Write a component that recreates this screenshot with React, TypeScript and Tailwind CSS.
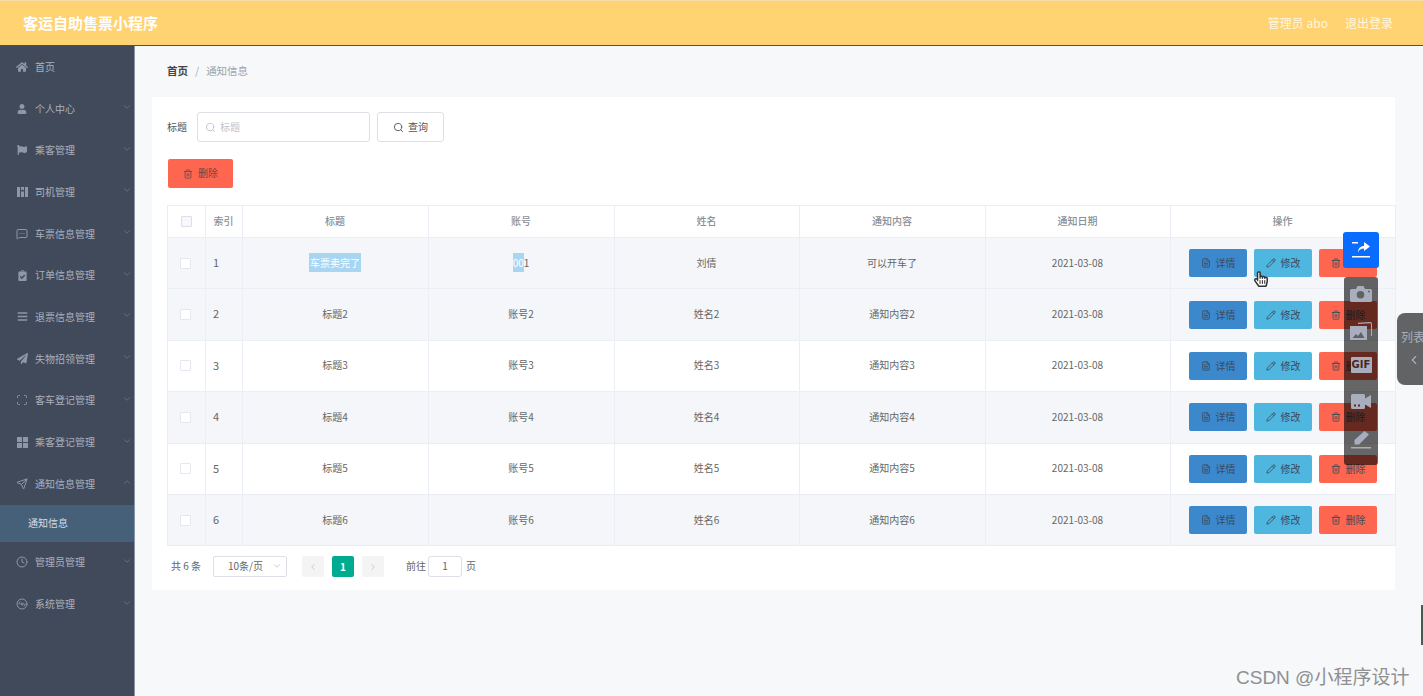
import { ChevronDown, ChevronLeft, ChevronRight, ChevronUp, Clock, Disc3, FileText, MessageSquareMore, Pencil, Scan, Search, Send, Trash2 } from 'lucide-react';
import { FaBars, FaClipboardCheck, FaFlag, FaHandPointer, FaHome, FaPaperPlane, FaRegHandPointer, FaUser } from 'react-icons/fa';
import type { ReactNode } from 'react';

const menu: { label: string; icon: ReactNode; arrow?: 'down' | 'up' }[] = [
  { label: '首页', icon: <FaHome size={12} /> },
  { label: '个人中心', icon: <FaUser size={10} />, arrow: 'down' },
  { label: '乘客管理', icon: <FaFlag size={10} />, arrow: 'down' },
  {
    label: '司机管理',
    icon: (
      <svg width="11" height="11" viewBox="0 0 11 11" fill="currentColor">
        <path d="M0 1h3v10H0zM4 1h3v3.500l-1.500-1L4 4.500zM4 5.500h3V11H4zM8 1h3v10H8z" />
      </svg>
    ),
    arrow: 'down',
  },
  { label: '车票信息管理', icon: <MessageSquareMore size={12} />, arrow: 'down' },
  { label: '订单信息管理', icon: <FaClipboardCheck size={11} />, arrow: 'down' },
  { label: '退票信息管理', icon: <FaBars size={11} />, arrow: 'down' },
  { label: '失物招领管理', icon: <FaPaperPlane size={11} />, arrow: 'down' },
  { label: '客车登记管理', icon: <Scan size={12} />, arrow: 'down' },
  {
    label: '乘客登记管理',
    icon: (
      <svg width="11" height="11" viewBox="0 0 11 11" fill="currentColor">
        <path d="M0 0h5v5H0zM6 0h5v5H6zM0 6h5v5H0zM6 6h5v5H6z" />
      </svg>
    ),
    arrow: 'down',
  },
  { label: '通知信息管理', icon: <Send size={12} />, arrow: 'up' },
];

const bottomMenu = [
  { label: '管理员管理', icon: <Clock size={12} /> },
  { label: '系统管理', icon: <Disc3 size={12} /> },
];

const rows = [
  { id: 1, title: '车票卖完了', account: '001', name: '刘倩', content: '可以开车了' },
  { id: 2, title: '标题2', account: '账号2', name: '姓名2', content: '通知内容2' },
  { id: 3, title: '标题3', account: '账号3', name: '姓名3', content: '通知内容3' },
  { id: 4, title: '标题4', account: '账号4', name: '姓名4', content: '通知内容4' },
  { id: 5, title: '标题5', account: '账号5', name: '姓名5', content: '通知内容5' },
  { id: 6, title: '标题6', account: '账号6', name: '姓名6', content: '通知内容6' },
];

function MenuItem({ label, icon, arrow }: { label: string; icon: ReactNode; arrow?: 'down' | 'up' }) {
  return (
    <div className="flex h-[41.7px] items-center pl-[16px] pr-[2px] text-[10px] text-[#a9b1bd]">
      <span className="flex w-[12px] justify-center text-[#8f97a5]">{icon}</span>
      <span className="ml-[7px] flex-1 pb-[1px]">{label}</span>
      {arrow === 'down' && <ChevronDown size={10} className="-mt-[3px] text-[#6d7686]" />}
      {arrow === 'up' && <ChevronUp size={10} className="-mt-[3px] text-[#6d7686]" />}
    </div>
  );
}

function ActionButton({ color, icon, label }: { color: string; icon: ReactNode; label: string }) {
  return (
    <span className={`flex h-[28px] w-[58px] items-center justify-center gap-[5px] rounded-[2px] text-[10px] text-[#3f4a55] ${color}`}>
      {icon}
      <span className="pb-[1px]">{label}</span>
    </span>
  );
}

export default function App() {
  return (
    <div className="relative flex h-[696px] w-[1423px] flex-col overflow-hidden bg-[#f6f8fa] font-['Noto_Sans_CJK_SC','Noto_Sans',sans-serif]">
      {/* Header */}
      <header className="flex h-[46px] shrink-0 items-center justify-between border-t border-b border-t-[#f6dca8] border-b-[#5a5040] bg-[#ffd272] pl-[23px] pr-[30px] text-white">
        <span className="text-[15px] font-bold">客运自助售票小程序</span>
        <div className="flex gap-[17px] text-[12px] text-[#fff6e0]">
          <span>管理员 abo</span>
          <span>退出登录</span>
        </div>
      </header>

      <div className="flex min-h-0 flex-1">
        {/* Sidebar */}
        <aside className="w-[135px] shrink-0 border-r border-r-[#8a95a3] bg-[#414a5b]">
          {menu.map((m) => (
            <MenuItem key={m.label} {...m} />
          ))}
          <div className="flex h-[37px] items-center bg-[#47607a] pb-[2px] pl-[28px] text-[10px] text-[#d5dde5]">通知信息</div>
          {bottomMenu.map((m) => (
            <MenuItem key={m.label} {...m} arrow="down" />
          ))}
        </aside>

        {/* Main */}
        <main className="min-w-0 flex-1 pl-[17px] pr-[28px]">
          <div className="flex h-[51px] items-center gap-[7px] pb-[2px] pl-[15px] text-[10.5px]">
            <span className="font-bold text-[#444]">首页</span>
            <span className="text-[#a8b0ba]">/</span>
            <span className="text-[#9aa5b1]">通知信息</span>
          </div>

          <section className="h-[493px] bg-white px-[15px] pt-[15px]">
            <div className="flex h-[30px] items-center">
              <span className="w-[22px] pb-[2px] text-[10px] text-[#555]">标题</span>
              <div className="ml-[8px] flex h-[30px] w-[173px] items-center rounded-[3px] border border-[#dcdfe6] pl-[7px] text-[10px] text-[#c0c4cc]">
                <Search size={11} />
                <span className="ml-[4px] pb-[2px]">标题</span>
              </div>
              <div className="ml-[7px] flex h-[30px] w-[67px] items-center justify-center gap-[4px] rounded-[3px] border border-[#dcdfe6] text-[10px] text-[#555]">
                <Search size={11} />
                <span className="pb-[2px]">查询</span>
              </div>
            </div>

            <div className="ml-[1px] mt-[17px] flex h-[29px] w-[65px] items-center justify-center gap-[5px] rounded-[2px] bg-[#ff6650] text-[10px] text-[#6b4a44]">
              <Trash2 size={10} />
              <span className="pb-[2px]">删除</span>
            </div>

            <table className="mt-[17px] w-[1228px] table-fixed border-collapse border border-[#ebeef5] text-center text-[10px] text-[#666]">
              <colgroup>
                <col className="w-[38px]" />
                <col className="w-[37px]" />
                <col className="w-[186px]" />
                <col className="w-[186px]" />
                <col className="w-[185px]" />
                <col className="w-[186px]" />
                <col className="w-[185px]" />
                <col className="w-[225px]" />
              </colgroup>
              <thead>
                <tr className="h-[32px] text-[#8b9097]">
                  <th className="border border-[#ebeef5] font-medium">
                    <span className="mx-auto block h-[11px] w-[11px] rounded-[1px] border border-[#dcdfe6] bg-[#f7f8fb]" />
                  </th>
                  {['索引', '标题', '账号', '姓名', '通知内容', '通知日期', '操作'].map((h) => (
                    <th key={h} className="border border-[#ebeef5] pb-[2px] pr-[1px] font-medium">
                      {h}
                    </th>
                  ))}
                </tr>
              </thead>
              <tbody>
                {rows.map((r) => (
                  <tr key={r.id} className={`h-[51.4px] ${r.id === 3 || r.id === 5 ? 'bg-white' : 'bg-[#f4f6fa]'}`}>
                    <td className="border border-[#ebeef5] pr-[3px]">
                      <span className="mx-auto block h-[11px] w-[11px] rounded-[1px] border border-[#e4e7ed] bg-white" />
                    </td>
                    <td className="border border-[#ebeef5] pb-[2px] pl-[7px] text-left text-[11px]">{r.id}</td>
                    <td className="border border-[#ebeef5] pb-[2px] pr-[1px]">
                      {r.id === 1 ? <span className="bg-[#a8d6f2] px-[1px] py-[2px] text-white">{r.title}</span> : r.title}
                    </td>
                    <td className="border border-[#ebeef5] pb-[2px] pr-[1px]">
                      {r.id === 1 ? (
                        <>
                          <span className="bg-[#a8d6f2] py-[2px] text-white">00</span>1
                        </>
                      ) : (
                        r.account
                      )}
                    </td>
                    <td className="border border-[#ebeef5] pb-[2px] pr-[1px]">{r.name}</td>
                    <td className="border border-[#ebeef5] pb-[2px] pr-[1px]">{r.content}</td>
                    <td className="border border-[#ebeef5] pb-[2px] pr-[1px]">2021-03-08</td>
                    <td className="border border-[#ebeef5]">
                      <div className="flex justify-center gap-[7px]">
                        <ActionButton color="bg-[#3b88cc]" icon={<FileText size={10} />} label="详情" />
                        <ActionButton color="bg-[#4fb6e0]" icon={<Pencil size={10} />} label="修改" />
                        <ActionButton color="bg-[#ff6650]" icon={<Trash2 size={10} />} label="删除" />
                      </div>
                    </td>
                  </tr>
                ))}
              </tbody>
            </table>

            {/* Pagination */}
            <div className="mt-[10px] flex h-[21px] items-center pl-[4px] text-[10px] text-[#666]">
              <span className="w-[31px] pb-[2px]">共 6 条</span>
              <div className="ml-[11px] flex h-[21px] w-[74px] items-center justify-between rounded-[2px] border border-[#dcdfe6] pb-[2px] pl-[14px] pr-[4px]">
                10条/页
                <ChevronDown size={10} className="text-[#c0c4cc]" />
              </div>
              <span className="ml-[15px] flex h-[21px] w-[22px] items-center justify-center rounded-[2px] bg-[#f4f4f5] text-[#c0c4cc]">
                <ChevronLeft size={10} />
              </span>
              <span className="ml-[8px] flex h-[21px] w-[22px] items-center justify-center rounded-[2px] bg-[#00ab90] pb-[1px] font-bold text-white">1</span>
              <span className="ml-[8px] flex h-[21px] w-[22px] items-center justify-center rounded-[2px] bg-[#f4f4f5] text-[#c0c4cc]">
                <ChevronRight size={10} />
              </span>
              <span className="ml-[22px] pb-[2px]">前往</span>
              <span className="ml-[2px] flex h-[21px] w-[34px] items-center justify-center rounded-[3px] border border-[#dcdfe6] pb-[2px]">1</span>
              <span className="ml-[4px] pb-[2px]">页</span>
            </div>
          </section>
        </main>
      </div>

      {/* Screen recorder overlay */}
      <div className="absolute left-[1343px] top-[232px] flex h-[36px] w-[36px] items-center justify-center rounded-[3px] bg-[#0a6cff]">
        <svg width="20" height="20" viewBox="0 0 20 20" fill="white">
          <path d="M1 2h6v1.500H1zM1 16h18v1.500H1zM13 2l6 4.500-6 4.500V8.500c-3 0-5 1-6 4 0-4 2.500-6.500 6-6.500z" />
        </svg>
      </div>
      <div className="absolute left-[1344px] top-[277px] flex h-[188px] w-[34px] flex-col items-center rounded-[3px] bg-black/60 pt-[9px] text-[#a9aebf]">
        <svg width="22" height="16" viewBox="0 0 22 16" fill="currentColor" className="shrink-0">
          <path fillRule="evenodd" d="M1.500 3H6l1.500-3h6L15 3h5.500A1.500 1.500 0 0 1 22 4.500v10a1.500 1.500 0 0 1-1.500 1.500h-19A1.500 1.500 0 0 1 0 14.500v-10A1.500 1.500 0 0 1 1.500 3zM10.500 5a3.800 3.800 0 1 0 0 7.600 3.800 3.800 0 0 0 0-7.600zM19 4.500a1 1 0 1 0 0 2 1 1 0 0 0 0-2z" />
        </svg>
        <svg width="22" height="18" viewBox="0 0 22 18" fill="currentColor" className="mt-[20px] shrink-0">
          <path fillRule="evenodd" d="M0 4h17v14H0zM2.500 16h12l-3.500-6-3 4-2-2zM8 .800 20 0a2 2 0 0 1 2 2v12h-1V2.200a1 1 0 0 0-1-1L8 2z" />
        </svg>
        <span className="mt-[17px] flex h-[16px] w-[21px] shrink-0 items-center justify-center rounded-[1px] bg-[#a9aebf] font-['DejaVu_Sans',sans-serif] text-[10px] font-bold leading-none text-[#4a2620]">GIF</span>
        <svg width="20" height="15" viewBox="0 0 20 15" fill="currentColor" className="mt-[21px] shrink-0">
          <path fillRule="evenodd" d="M1.500 0h11A1.500 1.500 0 0 1 14 1.500v3L20 1v13l-6-3.500v3a1.500 1.500 0 0 1-1.500 1.500h-11A1.500 1.500 0 0 1 0 13.500v-12A1.500 1.500 0 0 1 1.500 0zM3 10.500v2h2v-2zM7 10.500v2h2v-2z" />
        </svg>
        <svg width="20" height="18" viewBox="0 0 20 18" fill="currentColor" className="mt-[22px] shrink-0">
          <path d="M13.500 0 18 3.500 8 13.500H3.500V9zM0 16h20v1.500H0z" />
        </svg>
      </div>
      <div className="absolute left-[1397px] top-[313px] flex h-[72px] w-[26px] flex-col items-start overflow-hidden rounded-l-[8px] bg-black/60 pl-[4px] pt-[16px] text-[#a9aebf]">
        <span className="whitespace-nowrap text-[12px] leading-[16px]">列表</span>
        <ChevronLeft size={14} className="ml-[6px] mt-[8px]" />
      </div>
      <FaHandPointer size={16} className="absolute left-[1253px] top-[271px] text-white" />
      <FaRegHandPointer size={16} className="absolute left-[1253px] top-[271px] text-[#333]" />
      <div className="absolute left-[1421px] top-[605px] h-[40px] w-[2px] bg-[#4a5a50]" />
      <span className="absolute left-[1236px] top-[665px] font-['Liberation_Sans','Noto_Sans_CJK_SC',sans-serif] text-[19px] leading-[26px] text-[#8f9092]">CSDN @小程序设计</span>
    </div>
  );
}
